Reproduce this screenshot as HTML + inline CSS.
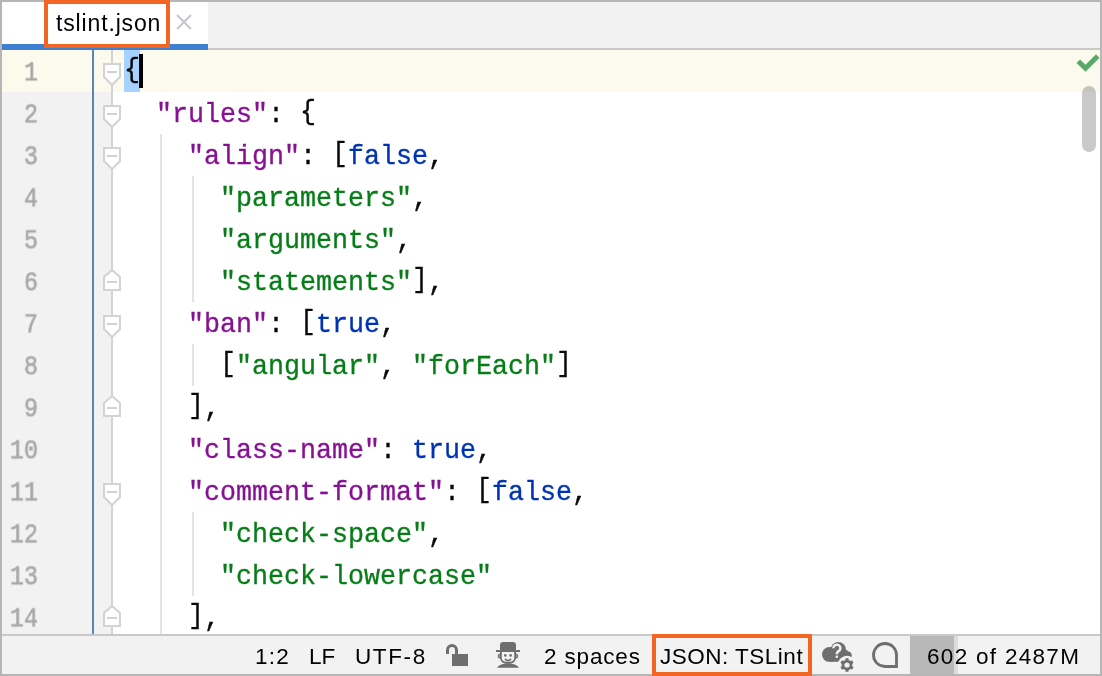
<!DOCTYPE html>
<html><head><meta charset="utf-8">
<style>
*{margin:0;padding:0;box-sizing:border-box}
html,body{width:1102px;height:676px;overflow:hidden;background:#fff}
body{position:relative;font-family:"Liberation Sans",sans-serif}
.abs{position:absolute}
#frame{left:0;top:0;width:1102px;height:676px;border:2px solid #b6b6b6;z-index:50}
#tabbar{left:0;top:0;width:1102px;height:50px;background:#f2f2f2}
#tabtxt{left:56px;top:9px;will-change:transform;font-size:23px;letter-spacing:0.85px;color:#000;line-height:28px;white-space:pre}
.ln{position:absolute;will-change:transform;left:0;width:38px;text-align:right;font-family:"Liberation Mono",monospace;font-size:26.67px;color:#a8a8a8;line-height:42px;white-space:pre;-webkit-text-stroke:0.6px currentColor;transform:scale(0.88,1.06);transform-origin:38px 28px}
.cl{position:absolute;will-change:transform;left:124px;font-family:"Liberation Mono",monospace;font-size:26.67px;line-height:42px;color:#080808;white-space:pre;-webkit-text-stroke:0.3px currentColor;transform:scaleY(1.045);transform-origin:0 28px}
.br{position:relative;top:-3px}
.k{color:#871094}.s{color:#067d17}.b{color:#0033b3}
#status{left:0;top:634px;width:1102px;height:42px;background:#f2f2f2;border-top:2px solid #c9c9c9}
.st{position:absolute;z-index:10;will-change:transform;top:6.5px;font-size:22.5px;line-height:28px;color:#000;white-space:pre}
.orange{border:4px solid #f26522;z-index:60}
</style></head><body>
<div id="tabbar" class="abs"></div>
<svg class="abs" style="left:0;top:0" width="1102" height="634" viewBox="0 0 1102 634">
 <rect x="0" y="48" width="1102" height="2" fill="#c9c9c9"/>
 <rect x="2" y="2" width="206" height="48" fill="#fff"/>
 <rect x="2" y="44" width="206" height="6" fill="#3d7fd1"/>
 <path d="M177 15L191 29M191 15L177 29" stroke="#c3c7cb" stroke-width="2"/>
 <!-- editor -->
 <rect x="0" y="50" width="1102" height="584" fill="#fff"/>
 <rect x="0" y="50" width="112" height="584" fill="#f2f2f2"/>
 <rect x="0" y="50" width="1102" height="42" fill="#fcfaed"/>
 <rect x="92" y="50" width="2" height="584" fill="#5c85b3"/>
 <rect x="111" y="50" width="2" height="584" fill="#d3d3d3"/>
 <g fill="#fff" stroke="#d3d3d3" stroke-width="2">
 <path d="M104 64H120V77L112 85L104 77Z"/><path d="M107 72H117"/>
 <path d="M104 106H120V119L112 127L104 119Z"/><path d="M107 114H117"/>
 <path d="M104 148H120V161L112 169L104 161Z"/><path d="M107 156H117"/>
 <path d="M104 316H120V329L112 337L104 329Z"/><path d="M107 324H117"/>
 <path d="M104 484H120V497L112 505L104 497Z"/><path d="M107 492H117"/>
 <path d="M112 270L120 277V290H104V277Z"/><path d="M107 282H117"/>
 <path d="M112 396L120 403V416H104V403Z"/><path d="M107 408H117"/>
 <path d="M112 606L120 613V626H104V613Z"/><path d="M107 618H117"/>
 </g>
 <g fill="#e4e4e4">
 <rect x="160" y="134" width="2" height="500"/>
 <rect x="192" y="176" width="2" height="126"/>
 <rect x="192" y="344" width="2" height="42"/>
 <rect x="192" y="512" width="2" height="84"/>
 </g>
 <rect x="124" y="50" width="16" height="42" fill="#a6d2ff"/>
 <rect x="139" y="54" width="4" height="34" fill="#000"/>
 <path d="M1078.3 61.3L1085.5 68.3L1097.8 56" fill="none" stroke="#59a869" stroke-width="5"/>
 <rect x="1082" y="86" width="14" height="66" rx="7" fill="rgba(0,0,0,0.21)"/>
</svg>
<div class="abs" style="left:0;top:50px;width:1102px;height:584px;overflow:hidden">
 <div class="ln" style="top:2px">1</div>
 <div class="ln" style="top:44px">2</div>
 <div class="ln" style="top:86px">3</div>
 <div class="ln" style="top:128px">4</div>
 <div class="ln" style="top:170px">5</div>
 <div class="ln" style="top:212px">6</div>
 <div class="ln" style="top:254px">7</div>
 <div class="ln" style="top:296px">8</div>
 <div class="ln" style="top:338px">9</div>
 <div class="ln" style="top:380px">10</div>
 <div class="ln" style="top:422px">11</div>
 <div class="ln" style="top:464px">12</div>
 <div class="ln" style="top:506px">13</div>
 <div class="ln" style="top:548px">14</div>
 <div class="cl" style="top:2px"><span class="br">{</span></div>
 <div class="cl" style="top:44px">  <span class="k">"rules"</span>: <span class="br">{</span></div>
 <div class="cl" style="top:86px">    <span class="k">"align"</span>: <span class="br">[</span><span class="b">false</span>,</div>
 <div class="cl" style="top:128px">      <span class="s">"parameters"</span>,</div>
 <div class="cl" style="top:170px">      <span class="s">"arguments"</span>,</div>
 <div class="cl" style="top:212px">      <span class="s">"statements"</span><span class="br">]</span>,</div>
 <div class="cl" style="top:254px">    <span class="k">"ban"</span>: <span class="br">[</span><span class="b">true</span>,</div>
 <div class="cl" style="top:296px">      <span class="br">[</span><span class="s">"angular"</span>, <span class="s">"forEach"</span><span class="br">]</span></div>
 <div class="cl" style="top:338px">    <span class="br">]</span>,</div>
 <div class="cl" style="top:380px">    <span class="k">"class-name"</span>: <span class="b">true</span>,</div>
 <div class="cl" style="top:422px">    <span class="k">"comment-format"</span>: <span class="br">[</span><span class="b">false</span>,</div>
 <div class="cl" style="top:464px">      <span class="s">"check-space"</span>,</div>
 <div class="cl" style="top:506px">      <span class="s">"check-lowercase"</span></div>
 <div class="cl" style="top:548px">    <span class="br">]</span>,</div>
</div>
<div id="tabtxt" class="abs">tslint.json</div>
<div id="status" class="abs">
 <div class="st" style="left:254.6px;letter-spacing:1.2px">1:2</div>
 <div class="st" style="left:309.2px">LF</div>
 <div class="st" style="left:355.2px;letter-spacing:1.6px">UTF-8</div>
 <div class="st" style="left:544px;letter-spacing:0.84px">2 spaces</div>
 <div class="st" style="left:659.7px;letter-spacing:0.5px">JSON: TSLint</div>
 <div class="st" style="left:927.4px;letter-spacing:1.3px">602 of 2487M</div>
</div>
<svg class="abs" style="left:0;top:0;z-index:5" width="1102" height="676" viewBox="0 0 1102 676">
 <rect x="910" y="636" width="44" height="38" fill="#b8b8b8"/>
 <rect x="954" y="636" width="4" height="38" fill="#dcdcdc"/>
 <g fill="#6e6e6e">
  <path d="M447.5 654V650A4.5 4.5 0 0 1 456.5 650V654" fill="none" stroke="#6e6e6e" stroke-width="3"/>
  <rect x="452" y="654" width="16" height="12"/>
  <path d="M500 650V645A3 3 0 0 1 503 642H513A3 3 0 0 1 516 645V650Z"/>
  <rect x="496" y="650" width="24" height="2"/>
  <circle cx="505.3" cy="655.4" r="1.3"/><circle cx="510.6" cy="655.4" r="1.3"/>
  <path d="M497 667.8Q500 663.6 508 663.6Q516 663.6 519 667.8Z"/>
 </g>
 <g fill="none" stroke="#6e6e6e" stroke-width="1.8">
  <path d="M500.9 651.5V657.8C500.9 661.6 503.6 663 508 663C512.4 663 515.1 661.6 515.1 657.8V651.5"/>
  <path d="M500.4 654.2A1.8 1.8 0 0 0 500.4 657.8" stroke-width="1.6"/>
  <path d="M515.6 654.2A1.8 1.8 0 0 1 515.6 657.8" stroke-width="1.6"/>
  <path d="M505.5 659.4Q508.05 661.9 510.6 659.4" stroke-width="1.6" stroke-linecap="round"/>
 </g>
 <g fill="#6e6e6e">
  <circle cx="829.4" cy="654.4" r="7.4"/>
  <circle cx="838.3" cy="649.6" r="7.6"/>
  <circle cx="847.5" cy="655.5" r="4.3"/>
  <rect x="829.4" y="650" width="18" height="11.8"/>
 </g>
 <circle cx="847" cy="665" r="9.3" fill="#f2f2f2"/>
 <path fill="#6e6e6e" d="M844.35 660.41 L845.45 659.93 L845.45 658.28 L848.55 658.28 L848.55 659.93 L849.65 660.41 L850.61 661.12 L852.05 660.29 L853.60 662.98 L852.16 663.81 L852.30 665.00 L852.16 666.19 L853.60 667.02 L852.05 669.71 L850.61 668.88 L849.65 669.59 L848.55 670.07 L848.55 671.72 L845.45 671.72 L845.45 670.07 L844.35 669.59 L843.39 668.88 L841.95 669.71 L840.40 667.02 L841.84 666.19 L841.70 665.00 L841.84 663.81 L840.40 662.98 L841.95 660.29 L843.39 661.12Z"/>
 <circle cx="847" cy="665" r="2.6" fill="#f2f2f2"/>
 <path d="M833.4 648.2A3.5 3.5 0 1 1 839.6 650.4Q836.8 652 836.8 654.2" fill="none" stroke="#f2f2f2" stroke-width="2.5"/>
 <rect x="835.6" y="655.6" width="2.4" height="2.2" fill="#f2f2f2"/>
 <path d="M896.5 655V666.5H885A11.5 11.5 0 1 1 896.5 655Z" fill="none" stroke="#6e6e6e" stroke-width="2.8"/>
</svg>
<div class="abs orange" style="left:44px;top:0;width:126px;height:48px"></div>
<div class="abs orange" style="left:652px;top:634px;width:160px;height:42px"></div>
<div id="frame" class="abs"></div>
</body></html>
